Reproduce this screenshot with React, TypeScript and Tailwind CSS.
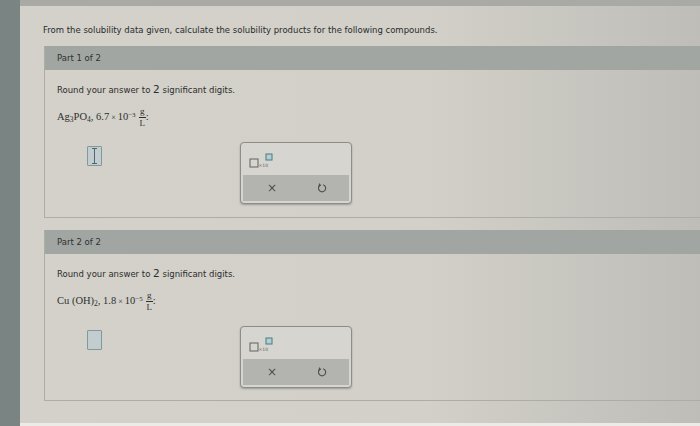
import React from "react";

function ExpIcon() {
  return (
    <svg width="26" height="16" viewBox="0 0 26 16" fill="none">
      <rect x="1" y="6" width="8" height="8" stroke="#5f6361" strokeWidth="1" />
      <text x="9.5" y="14" fontSize="4.5" fill="#5f6361" fontFamily="DejaVu Sans, sans-serif">×10</text>
      <rect x="17" y="1" width="6" height="6" stroke="#3f7f86" strokeWidth="1" fill="#b9ccd0" />
    </svg>
  );
}

function Toolbox() {
  return (
    <div className="w-[112px] h-[62px] rounded-[4px] border border-[#8d8e8a] bg-[#d7d5cf] shadow-[0_1px_2px_rgba(0,0,0,0.25)] p-[2px] flex flex-col">
      <div className="h-[30px] flex items-center pl-[6px] pt-[2px]">
        <ExpIcon />
      </div>
      <div className="flex-1 bg-[#b3b4b0] flex items-center justify-around text-[#4a4d4c]">
        <span className="text-[12px] leading-none font-['DejaVu_Sans',sans-serif] pl-[4px]">×</span>
        <svg width="10" height="10" viewBox="0 0 10 10" fill="none" className="mr-[2px]">
          <path d="M3 2.3 A3.6 3.6 0 1 0 6.2 1.8" stroke="#4a4d4c" strokeWidth="1.1" />
          <path d="M2 0.6 L3.4 2.4 L1.3 3.3" stroke="#4a4d4c" strokeWidth="1.1" />
        </svg>
      </div>
    </div>
  );
}

function AnswerBox({ cursor }: { cursor?: boolean }) {
  return (
    <div className="w-[15px] h-[20px] border border-[#7e9a9c] bg-[#c3cdd0] rounded-[1px] flex items-center justify-center">
      {cursor && (
        <div className="flex flex-col items-center">
          <div className="w-[5px] h-px bg-[#50686a]" />
          <div className="w-px h-[14px] bg-[#50686a]" />
          <div className="w-[5px] h-px bg-[#50686a]" />
        </div>
      )}
    </div>
  );
}

function Frac() {
  return (
    <span className="inline-flex flex-col items-center text-[9px] leading-[9px] ml-[3px]">
      <span className="block">g</span>
      <span className="block w-[7px] h-px bg-[#2d2f2f] my-[1px]" />
      <span className="block">L</span>
    </span>
  );
}

function Part({
  label,
  formula,
  cursor,
  bodyH,
}: {
  label: string;
  formula: React.ReactNode;
  cursor?: boolean;
  bodyH: string;
}) {
  return (
    <div className="ml-[24px] border-l border-b border-[#aeaca6]">
      <div className="h-[24px] bg-[#a1a6a3] flex items-center pl-[12px] text-[8.5px] text-[#2e3131] font-['DejaVu_Sans',sans-serif]">
        {label}
      </div>
      <div className={`${bodyH} pl-[12px] pt-[12px]`}>
        <div className="text-[8.5px] leading-[14px] text-[#2b2d2d] font-['DejaVu_Sans',sans-serif] h-[14px]">
          Round your answer to <span className="text-[10.5px]">2</span> significant digits.
        </div>
        <div className="mt-[10px] h-[22px] font-['Liberation_Serif',serif] text-[10.5px] text-[#2d2f2f] flex items-center">
          {formula}
        </div>
        <div className="flex items-start mt-[14px]">
          <div className="ml-[30px] mt-[4px]">
            <AnswerBox cursor={cursor} />
          </div>
          <div className="ml-[138px]">
            <Toolbox />
          </div>
        </div>
      </div>
    </div>
  );
}

export default function App() {
  return (
    <div className="w-[700px] h-[426px] flex overflow-hidden bg-[#cfcdc6]">
      <div className="w-[20px] h-full bg-[#7a8483]" />
      <div className="flex-1 flex flex-col bg-[linear-gradient(90deg,#d3d1c9_0%,#d2d0c8_60%,#bebdb8_100%)]">
        <div className="h-[6px] bg-[#a9a9a5]" />
        <div className="pl-[23px] pt-[18px] h-[40px] text-[8.5px] text-[#2a2c2c] font-['DejaVu_Sans',sans-serif]">
          From the solubility data given, calculate the solubility products for the following compounds.
        </div>
        <Part
          label="Part 1 of 2"
          cursor
          bodyH="h-[147px]"
          formula={
            <>
              <span>
                Ag<sub className="text-[7.5px]">3</sub>PO<sub className="text-[7.5px]">4</sub>, 6.7
                <span className="text-[8px] mx-[2px]">×</span>10<sup className="text-[7px]">−3</sup>
              </span>
              <Frac />
              <span>:</span>
            </>
          }
        />
        <div className="h-[12px]" />
        <Part
          label="Part 2 of 2"
          bodyH="h-[146px]"
          formula={
            <>
              <span>
                Cu (OH)<sub className="text-[7.5px]">2</sub>, 1.8
                <span className="text-[8px] mx-[2px]">×</span>10<sup className="text-[7px]">−5</sup>
              </span>
              <Frac />
              <span>:</span>
            </>
          }
        />
        <div className="flex-1" />
        <div className="h-[3px] bg-[#ecebe7]" />
      </div>
    </div>
  );
}
